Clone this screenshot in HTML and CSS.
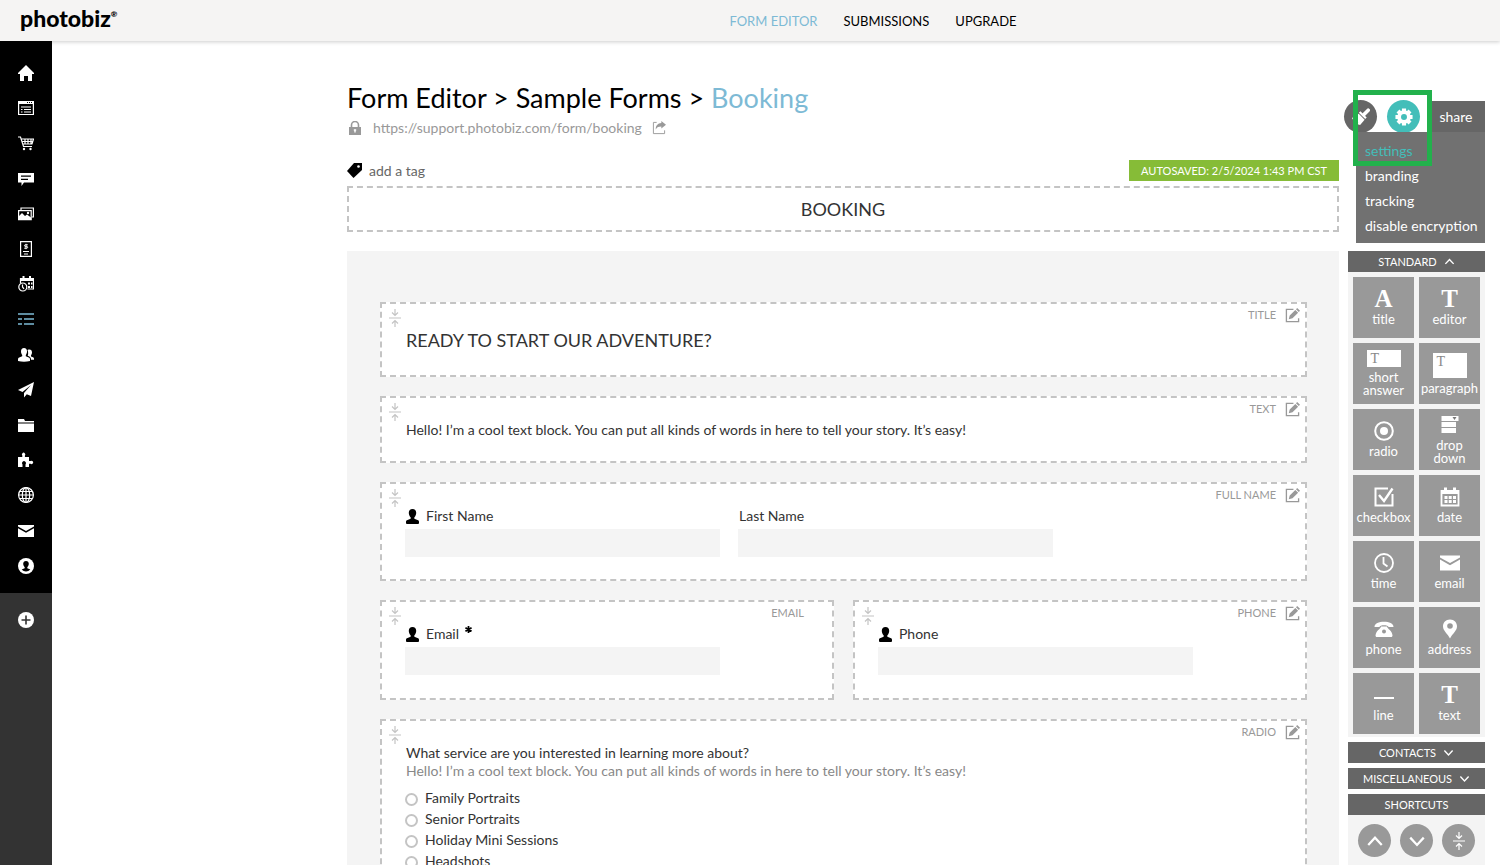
FILE: index.html
```html
<!DOCTYPE html>
<html lang="en">
<head>
    <meta charset="UTF-8">
    <meta name="viewport" content="width=device-width, initial-scale=1.0">
    <title>Photobiz - Form Editor</title>
    <link rel="stylesheet" href="styles.css">
</head>
<body>

    <!-- Shared icons -->
    <svg class="sprite" aria-hidden="true">
        <symbol id="move" viewBox="0 0 12 18">
            <path d="M6 0v6M3 3.500l3 3 3-3M0 9h12M6 18v-6M3 14.500l3-3 3 3" fill="none" stroke="currentColor" stroke-width="1.200"/>
        </symbol>
        <symbol id="edit" viewBox="0 0 16 16">
            <path d="M9 1.500H1.500v13h13V11" fill="none" stroke="currentColor" stroke-width="1.400"/>
            <path d="M4 12l1-4 6-6 3 3-6 6zM11.700 1.300L13 0l3 3-1.300 1.300z" fill="currentColor"/>
        </symbol>
        <symbol id="person" viewBox="0 0 14 16">
            <path d="M7 0c2.500 0 4 1.800 4 4 0 2-.8 3.800-2 4.800v1.700l4 1.600c.8.400 1 1 1 1.800V15c0 .6-.4 1-1 1H1c-.6 0-1-.4-1-1v-1.100c0-.8.200-1.400 1-1.800l4-1.600V8.800C3.800 7.800 3 6 3 4c0-2.200 1.500-4 4-4z" fill="currentColor"/>
        </symbol>
        <symbol id="up" viewBox="0 0 16 16">
            <path d="M2 11.500L8 5l6 6.500" fill="none" stroke="currentColor" stroke-width="2"/>
        </symbol>
        <symbol id="down" viewBox="0 0 16 16">
            <path d="M2 5l6 6.500L14 5" fill="none" stroke="currentColor" stroke-width="2"/>
        </symbol>
        <symbol id="mail" viewBox="0 0 16 16">
            <path d="M0 2h16v1.500L8 8 0 3.500zM0 5.200l8 4.500 8-4.500V14H0z" fill="currentColor"/>
        </symbol>
    </svg>

    <header class="header">
        <a href="#" class="logo">photobiz<sup>®</sup></a>
        <nav class="top-nav">
            <a href="#" class="active">FORM EDITOR</a>
            <a href="#">SUBMISSIONS</a>
            <a href="#">UPGRADE</a>
        </nav>
    </header>

    <div class="page">
        <!-- Sidebar -->
        <aside class="sidebar">
            <nav class="side-nav">
                <a href="#" aria-label="Home"><svg viewBox="0 0 16 16"><path d="M8 0l8 8v1h-2v7h-4v-5H6v5H2V9H0V8z" fill="currentColor"/></svg></a>
                <a href="#" aria-label="Website"><svg viewBox="0 0 16 16"><path d="M.6 1.500h14.800v13H.6z" fill="none" stroke="currentColor" stroke-width="1.200"/><path d="M0 1h16v3H0z" fill="currentColor"/><path d="M9 2.500h1M11 2.500h1M13 2.500h1" stroke="#000"/><path d="M3 7h10M3 9.500h1.500M6 9.500h7M3 12h1.500M6 12h7" stroke="currentColor" stroke-width="1.200"/></svg></a>
                <a href="#" aria-label="Store"><svg viewBox="0 0 16 16"><path d="M0 2h2.500l3 9.500H14M3.300 4H15.500L14 9H5M4.300 6.500H15M7 4v5M10 4v5M13 4v5" fill="none" stroke="currentColor" stroke-width="1.200"/><circle cx="6" cy="14" r="1.200" fill="currentColor"/><circle cx="12.500" cy="14" r="1.200" fill="currentColor"/></svg></a>
                <a href="#" aria-label="Blog"><svg viewBox="0 0 16 16"><path d="M0 2h16v9.500H6L3.500 15v-3.500H0z" fill="currentColor"/><path d="M3 5.200h10M3 8.300h7" stroke="#000" stroke-width="1.200"/></svg></a>
                <a href="#" aria-label="Galleries"><svg viewBox="0 0 16 16"><path d="M3 4V2h12.400v9H14M.6 4.600h12.600v9H.6z" fill="none" stroke="currentColor" stroke-width="1.200"/><path d="M1 13v-3l3-3 3 3 2-1.500 4 3V14H1z" fill="currentColor"/><circle cx="10" cy="7" r="1.200" fill="currentColor"/></svg></a>
                <a href="#" aria-label="Invoices"><svg viewBox="0 0 16 16"><path d="M2.600.6h10.800v14.800H2.600z" fill="none" stroke="currentColor" stroke-width="1.200"/><path d="M9.800 3.800H7.200c-1 0-1 1.600 0 1.600h1.600c1.200 0 1.200 1.800 0 1.800H6.200M8 2.800v5.400M5 10.500h6M6 13h4" fill="none" stroke="currentColor"/></svg></a>
                <a href="#" aria-label="Scheduler"><svg viewBox="0 0 16 16"><path d="M2.500 7V2.500h13v10.500H9.500" fill="none" stroke="currentColor" stroke-width="1.200"/><path d="M2 2h14v3H2zM4.500 0h2v3h-2zM11 0h2v3h-2zM10 6.500h2v2h-2zM13 6.500h1.500v2H13zM10 10h2v2h-2zM13 10h1.500v2H13z" fill="currentColor"/><circle cx="4.800" cy="11" r="4" fill="#000" stroke="currentColor" stroke-width="1.200"/><path d="M4.500 8.500V11l1.500 1.800" fill="none" stroke="currentColor" stroke-width="1.200"/></svg></a>
                <a href="#" class="active" aria-label="Forms"><svg viewBox="0 0 16 16"><path d="M0 3h16M0 8h4M6 8h10M0 13h4M6 13h10" stroke="currentColor" stroke-width="1.400"/></svg></a>
                <a href="#" aria-label="Contacts"><svg viewBox="0 0 16 16"><path d="M6 1c2 0 3 1.300 3 3.300C9 6 8.500 7 7.800 8v1.200l3 1.300c.8.400 1.200 1 1.200 2V14c-4 1-8 1-12 0v-1.500c0-1 .4-1.600 1.200-2l3-1.300V8C3.500 7 3 6 3 4.300 3 2.300 4 1 6 1z" fill="currentColor"/><path d="M9.500 3c3-1.200 4.500.3 4.500 2.500 0 1.300-.5 2-1 2.800v1.200l2 .8c.7.300 1 .8 1 1.500v1h-3c0-2-.5-2.800-3.300-4C10.300 7.500 10.400 5 9.500 3z" fill="currentColor"/></svg></a>
                <a href="#" aria-label="Email marketing"><svg viewBox="0 0 16 16"><path d="M16 0L0 8l4.500 2L13 3 6 11v4.500l2.800-3.300L13 14z" fill="currentColor"/></svg></a>
                <a href="#" aria-label="Files"><svg viewBox="0 0 16 16"><path d="M0 2h6l1 2h9v1.500H0zM0 6.500h16V15H0z" fill="currentColor"/></svg></a>
                <a href="#" aria-label="Apps"><svg viewBox="0 0 16 16"><path d="M0 5h4.300V3.500a1.700 1.700 0 1 1 2.600 0V5H11v4h1.500a1.700 1.700 0 1 1 0 2.800H11V15H7.500v-2.500a2 2 0 1 0-3 0V15H0z" fill="currentColor"/></svg></a>
                <a href="#" aria-label="Domains"><svg viewBox="0 0 16 16"><g fill="none" stroke="currentColor" stroke-width="1.200"><circle cx="8" cy="8" r="7.400"/><ellipse cx="8" cy="8" rx="3.700" ry="7.400"/><path d="M8 0v16M.5 8h15M1.500 4.500h13M1.500 11.500h13"/></g></svg></a>
                <a href="#" aria-label="Mail"><svg><use href="#mail"/></svg></a>
                <a href="#" aria-label="Account"><svg viewBox="0 0 16 16"><circle cx="8" cy="8" r="8" fill="currentColor"/><path d="M8 3c1.800 0 2.800 1.200 2.800 2.800S10 8.500 9.300 9.200v1l3 1.300C10 14 6 14 3.700 11.500l3-1.300v-1C6 8.500 5.200 7.400 5.200 5.800S6.200 3 8 3z" fill="#000"/></svg></a>
            </nav>
            <a href="#" class="add" aria-label="Add"><svg viewBox="0 0 16 16"><circle cx="8" cy="8" r="8" fill="currentColor"/><path d="M8 3.500v9M3.500 8h9" stroke="#333" stroke-width="1.600"/></svg></a>
        </aside>

        <main class="main">
            <!-- Form column -->
            <section class="editor">
                <h1>Form Editor &gt; Sample Forms &gt; <span>Booking</span></h1>
                <div class="url">
                    <svg class="lock" viewBox="0 0 14 14"><path d="M3.500 7V4a3.500 3.500 0 0 1 7 0v3" fill="none" stroke="currentColor" stroke-width="1.600"/><path d="M1 6h12v8H1z" fill="currentColor"/><path d="M7 8.500v3M5.800 9h2.400" stroke="#fff" stroke-width="1.400"/></svg>
                    <a href="#">https://support.photobiz.com/form/booking</a>
                    <svg class="open" viewBox="0 0 15 15"><path d="M5 1.500H1.500v12h12V10" fill="none" stroke="currentColor"/><path d="M10 0l5 4-5 4V5.800C7 5.800 5.500 6.500 4 9c0-4 2-6.500 6-6.800z" fill="currentColor"/></svg>
                </div>

                <div class="meta">
                    <button type="button" class="add-tag">
                        <svg viewBox="0 0 15 15"><path d="M7 0h8v7l-8.500 8L0 8z" fill="currentColor"/><circle cx="11.500" cy="3.500" r="1.300" fill="#fff"/></svg>
                        add a tag
                    </button>
                    <span class="autosaved">AUTOSAVED: 2/5/2024 1:43 PM CST</span>
                </div>

                <div class="form-name">BOOKING</div>

                <form class="form">
                    <div class="block">
                        <svg class="handle"><use href="#move"/></svg>
                        <div class="content"><h2>READY TO START OUR ADVENTURE?</h2></div>
                        <div class="tools">TITLE <button type="button" aria-label="Edit title"><svg><use href="#edit"/></svg></button></div>
                    </div>

                    <div class="block">
                        <svg class="handle"><use href="#move"/></svg>
                        <div class="content"><p>Hello! I’m a cool text block. You can put all kinds of words in here to tell your story. It’s easy!</p></div>
                        <div class="tools">TEXT <button type="button" aria-label="Edit text"><svg><use href="#edit"/></svg></button></div>
                    </div>

                    <div class="block">
                        <svg class="handle"><use href="#move"/></svg>
                        <div class="content fields">
                            <div class="field">
                                <label for="first"><svg class="person"><use href="#person"/></svg>First Name</label>
                                <input type="text" id="first">
                            </div>
                            <div class="field">
                                <label for="last">Last Name</label>
                                <input type="text" id="last">
                            </div>
                        </div>
                        <div class="tools">FULL NAME <button type="button" aria-label="Edit full name"><svg><use href="#edit"/></svg></button></div>
                    </div>

                    <div class="row">
                        <div class="block">
                            <svg class="handle"><use href="#move"/></svg>
                            <div class="content fields">
                                <div class="field">
                                    <label for="email"><svg class="person"><use href="#person"/></svg>Email <svg class="required" viewBox="0 0 8 8"><path d="M4 0v8M.5 2l7 4M7.500 2l-7 4" stroke="#000" stroke-width="2"/></svg></label>
                                    <input type="email" id="email">
                                </div>
                            </div>
                            <div class="tools no-edit">EMAIL</div>
                        </div>
                        <div class="block">
                            <svg class="handle"><use href="#move"/></svg>
                            <div class="content fields">
                                <div class="field">
                                    <label for="phone"><svg class="person"><use href="#person"/></svg>Phone</label>
                                    <input type="tel" id="phone">
                                </div>
                            </div>
                            <div class="tools">PHONE <button type="button" aria-label="Edit phone"><svg><use href="#edit"/></svg></button></div>
                        </div>
                    </div>

                    <div class="block">
                        <svg class="handle"><use href="#move"/></svg>
                        <div class="content">
                            <p>What service are you interested in learning more about?</p>
                            <p class="hint">Hello! I’m a cool text block. You can put all kinds of words in here to tell your story. It’s easy!</p>
                            <div class="options">
                                <label><input type="radio" name="service">Family Portraits</label>
                                <label><input type="radio" name="service">Senior Portraits</label>
                                <label><input type="radio" name="service">Holiday Mini Sessions</label>
                                <label><input type="radio" name="service">Headshots</label>
                            </div>
                        </div>
                        <div class="tools">RADIO <button type="button" aria-label="Edit radio"><svg><use href="#edit"/></svg></button></div>
                    </div>
                </form>
            </section>

            <!-- Tools column -->
            <aside class="panel">
                <div class="toolbar">
                    <button type="button" class="circle dark" aria-label="Design"><svg viewBox="0 0 20 20"><path d="M18 2.500l-5 5" stroke="#fff" stroke-width="4" stroke-linecap="round"/><path d="M8.500 4.500l7 7" stroke="#fff" stroke-width="2.400"/><path d="M7.500 6.500l6.500 6.500-5 6-3-1 1-2.500-3 1.500-1.500-2 2-2.500-3 1L0 11z" fill="#fff"/></svg></button>
                    <button type="button" class="circle teal" aria-label="Settings"><svg viewBox="0 0 20 20"><g stroke="#fff" stroke-width="4.600"><path d="M10 .5v19M.5 10h19M3.300 3.300l13.400 13.400M16.700 3.300L3.300 16.700"/></g><circle cx="10" cy="10" r="7.500" fill="#fff"/><circle cx="10" cy="10" r="3.300" fill="#43beb9"/></svg></button>
                    <button type="button" class="share">share</button>
                    <span class="highlight"></span>
                </div>
                <nav class="menu">
                    <a href="#" class="active">settings</a>
                    <a href="#">branding</a>
                    <a href="#">tracking</a>
                    <a href="#">disable encryption</a>
                </nav>

                <button type="button" class="bar">STANDARD <svg><use href="#up"/></svg></button>
                <div class="tiles">
                    <button type="button"><span class="letter">A</span>title</button>
                    <button type="button"><span class="letter">T</span>editor</button>
                    <button type="button"><span class="box">T</span>short answer</button>
                    <button type="button"><span class="box tall">T</span>paragraph</button>
                    <button type="button"><svg viewBox="0 0 20 20"><circle cx="10" cy="10" r="8.800" fill="none" stroke="#fff" stroke-width="2"/><circle cx="10" cy="10" r="4" fill="#fff"/></svg>radio</button>
                    <button type="button"><svg viewBox="0 0 20 20"><path d="M1.500 1h17v5h-17zM1.500 7h14.500v5H1.500zM1.500 13h14.500v5H1.500z" fill="#fff"/><path d="M12.500 2h4l-2 3z" fill="#777"/></svg>drop down</button>
                    <button type="button"><svg viewBox="0 0 20 20"><path d="M14 1.500H1.500v17h17V7" fill="none" stroke="#fff" stroke-width="2"/><path d="M5 8l5 6L18.500 1.500" fill="none" stroke="#fff" stroke-width="2.400"/></svg>checkbox</button>
                    <button type="button"><svg viewBox="0 0 20 20"><path d="M1.500 4h17v14.500h-17z" fill="none" stroke="#fff" stroke-width="1.800"/><path d="M1 3h18v4H1zM4 .5h3V4H4zM13 .5h3V4h-3zM4.500 9h3v3h-3zM8.700 9h3v3h-3zM13 9h3v3h-3zM4.500 13h3v3h-3zM8.700 13h3v3h-3zM13 13h3v3h-3z" fill="#fff"/></svg>date</button>
                    <button type="button"><svg viewBox="0 0 20 20"><circle cx="10" cy="10" r="9" fill="none" stroke="#fff" stroke-width="1.800"/><path d="M9.500 4v6.500l4 3" fill="none" stroke="#fff" stroke-width="1.800"/></svg>time</button>
                    <button type="button"><svg><use href="#mail"/></svg>email</button>
                    <button type="button"><svg viewBox="0 0 20 20"><path d="M.5 8C0 1 20 1 19.500 8h-5c0-2.500-9-2.500-9 0z" fill="#fff"/><path d="M7 7.500h6c.5 2.500 5 4 5.500 9 0 .8-.5 1.500-1.300 1.500H2.800c-.8 0-1.300-.7-1.300-1.500.5-5 5-6.500 5.500-9z" fill="#fff"/><circle cx="10" cy="12.500" r="2" fill="#999"/></svg>phone</button>
                    <button type="button"><svg viewBox="0 0 20 20"><path d="M10 .5c4.300 0 7 3 7 6.800C17 12 12.500 14.500 10 19.500 7.500 14.500 3 12 3 7.300 3 3.500 5.700.5 10 .5z" fill="#fff"/><circle cx="10" cy="7" r="2.800" fill="#999"/></svg>address</button>
                    <button type="button"><svg viewBox="0 0 20 20"><path d="M0 13h20" stroke="#fff" stroke-width="2"/></svg>line</button>
                    <button type="button"><span class="letter">T</span>text</button>
                </div>
                <button type="button" class="bar">CONTACTS <svg><use href="#down"/></svg></button>
                <button type="button" class="bar">MISCELLANEOUS <svg><use href="#down"/></svg></button>
                <div class="bar last">SHORTCUTS</div>
                <div class="shortcuts">
                    <button type="button" class="circle" aria-label="Move up"><svg><use href="#up"/></svg></button>
                    <button type="button" class="circle" aria-label="Move down"><svg><use href="#down"/></svg></button>
                    <button type="button" class="circle" aria-label="Collapse"><svg><use href="#move"/></svg></button>
                </div>
            </aside>
        </main>
    </div>

</body>
</html>
```
FILE: styles.css
```css
/* General Styles */
* {
    box-sizing: border-box;
}

body {
    margin: 0;
    height: 100vh;
    display: flex;
    flex-direction: column;
    overflow: hidden;
    background: #fff;
    color: #333;
    font-family: Lato, sans-serif;
    font-size: 14px;
    line-height: 18px;
}

a {
    color: inherit;
    text-decoration: none;
}

button {
    padding: 0;
    border: none;
    background: none;
    color: inherit;
    font: inherit;
    cursor: pointer;
}

svg {
    display: block;
    flex: none;
}

h1, h2, p {
    margin: 0;
    font-weight: 400;
}

.sprite {
    display: none;
}

/* Header */
.header {
    display: grid;
    grid-template-columns: 1fr auto 1fr;
    align-items: center;
    flex: none;
    height: 41px;
    padding: 0 20px;
    background: #f5f4f3;
    box-shadow: 0 1px 4px rgba(0, 0, 0, 0.2);
}

.logo {
    align-self: start;
    color: #000;
    font-size: 23px;
    font-weight: 900;
    line-height: 36px;
}

.logo sup {
    font-size: 8px;
    line-height: 0;
    vertical-align: 10px;
}

.top-nav {
    display: flex;
    gap: 26px;
    padding-left: 246px;
    color: #000;
    font-size: 13px;
}

.top-nav .active {
    color: #7dbad5;
}

.page {
    display: flex;
    flex: 1;
    min-height: 0;
}

/* Sidebar */
.sidebar {
    position: relative;
    flex: none;
    width: 52px;
    background: #333;
    color: #fff;
}

.side-nav {
    display: flex;
    flex-direction: column;
    justify-content: space-between;
    align-items: center;
    height: 552px;
    padding: 24px 0 19px;
    background: #000;
}

.sidebar svg {
    width: 16px;
    height: 16px;
}

.side-nav .active {
    color: #7dbad5;
}

.add {
    display: flex;
    justify-content: center;
    padding-top: 19px;
}

/* Main Area */
.main {
    display: flex;
    flex: 1;
    align-items: flex-start;
    gap: 9px;
    padding: 39px 15px 0 295px;
    overflow: hidden;
}

.editor {
    flex: 1;
    min-width: 0;
}

h1 {
    color: #000;
    font-size: 27px;
    line-height: 36px;
}

h1 span {
    color: #7dbad5;
}

.url {
    display: flex;
    align-items: center;
    gap: 10px;
    height: 24px;
    color: #999;
}

.lock {
    width: 16px;
    height: 14px;
}

.open {
    width: 14px;
    height: 14px;
}

.meta {
    display: flex;
    justify-content: space-between;
    margin: 20px 0 5px;
}

.add-tag {
    display: flex;
    align-items: center;
    gap: 7px;
    color: #666;
}

.add-tag svg {
    width: 15px;
    height: 15px;
    color: #000;
}

.autosaved {
    padding: 0 12px;
    background: #86bc37;
    color: #fff;
    font-size: 11px;
    line-height: 21px;
}

.form-name {
    border: 2px dashed #c4c4c4;
    font-size: 18px;
    line-height: 42px;
    text-align: center;
}

/* Form Blocks */
.form {
    display: flex;
    flex-direction: column;
    gap: 19px;
    margin-top: 19px;
    padding: 51px 32px 51px 33px;
    background: #f4f4f4;
}

.row {
    display: grid;
    grid-template-columns: 1fr 1fr;
    gap: 19px;
}

.block {
    display: flex;
    align-items: flex-start;
    border: 2px dashed #c4c4c4;
    background: #fff;
}

.row .block {
    min-height: 100px;
}

.handle {
    width: 12px;
    height: 18px;
    margin: 5px 4px 0 7px;
    color: #c4c4c4;
}

.content {
    flex: 1;
    padding: 23px 0 22px;
}

.content h2 {
    padding-left: 1px;
    font-size: 18px;
    line-height: 26px;
}

.content p {
    padding-left: 1px;
}

.content .hint {
    color: #888;
}

.fields {
    display: flex;
    gap: 18px;
}

.field label {
    display: flex;
    align-items: center;
    padding-left: 1px;
}

.field input {
    display: block;
    width: 315px;
    height: 28px;
    margin-top: 4px;
    border: none;
    background: #f4f4f4;
}

.person {
    width: 13px;
    height: 15px;
    margin-right: 7px;
    color: #000;
}

.required {
    width: 7px;
    height: 7px;
    margin: 0 0 9px 6px;
}

.tools {
    display: flex;
    gap: 9px;
    margin: 2px 5px 0 0;
    color: #999;
    font-size: 11px;
}

.tools svg {
    width: 15px;
    height: 15px;
}

.no-edit {
    margin-right: 28px;
}

/* Radio Options */
.options {
    display: grid;
    gap: 3px;
    margin-top: 9px;
}

.options label {
    display: flex;
    align-items: center;
    gap: 7px;
}

.options input {
    appearance: none;
    width: 13px;
    height: 13px;
    margin: 2px 0 0;
    border: 2px solid #c4c4c4;
    border-radius: 50%;
}

/* Tools Panel */
.panel {
    flex: none;
    width: 137px;
    margin-top: 20px;
    color: #fff;
}

.toolbar {
    position: relative;
    display: flex;
    justify-content: flex-end;
    align-items: flex-end;
    height: 33px;
}

.circle {
    display: flex;
    flex: none;
    justify-content: center;
    align-items: center;
    width: 33px;
    height: 33px;
    border-radius: 50%;
    background: #999;
}

.circle svg {
    width: 18px;
    height: 18px;
}

.dark {
    background: #666;
}

.teal {
    margin: 0 7px 0 10px;
    background: #43beb9;
}

.share {
    flex: none;
    width: 58px;
    height: 32px;
    background: #666;
}

/* Green frame around the settings menu entry */
.highlight {
    position: absolute;
    z-index: 2;
    top: -10px;
    left: 5px;
    width: 79px;
    height: 76px;
    border: 5px solid #22b14c;
    pointer-events: none;
}

.menu {
    position: relative;
    display: flex;
    flex-direction: column;
    margin: -1px 0 8px 8px;
    padding: 6px 9px 5px;
    background: #717171;
    line-height: 25px;
    white-space: nowrap;
}

.menu .active {
    color: #43beb9;
}

.bar {
    display: flex;
    justify-content: center;
    align-items: center;
    gap: 7px;
    width: 100%;
    height: 21px;
    margin-bottom: 5px;
    background: #666;
    font-size: 11px;
}

.bar svg {
    width: 11px;
    height: 11px;
}

.bar:has(+ .tiles), .last {
    margin-bottom: 0;
}

.tiles {
    display: grid;
    grid-template-columns: 1fr 1fr;
    gap: 5px;
    margin-bottom: 5px;
    padding: 5px 5px 3px;
    background: #f4f4f4;
}

.tiles button {
    display: flex;
    flex-direction: column;
    justify-content: center;
    align-items: center;
    gap: 4px;
    height: 61px;
    background: #999;
    font-size: 13px;
    line-height: 13px;
}

.tiles svg {
    width: 20px;
    height: 20px;
}

.letter {
    font-family: "Liberation Serif", serif;
    font-size: 25px;
    font-weight: 700;
    line-height: 20px;
}

.box {
    width: 34px;
    height: 17px;
    padding-left: 4px;
    background: #fff;
    color: #888;
    font-family: "Liberation Serif", serif;
    font-size: 14px;
    line-height: 17px;
    text-align: left;
}

.tall {
    height: 25px;
}

.shortcuts {
    display: flex;
    justify-content: space-between;
    padding: 9px 10px 20px;
    background: #f4f4f4;
}
```
